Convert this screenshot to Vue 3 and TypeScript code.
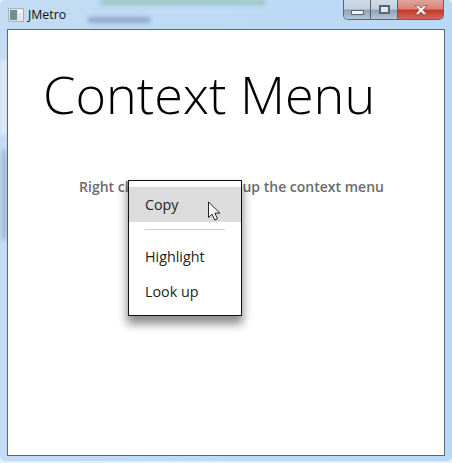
<script setup lang="ts">
const items: string[] = ['Highlight', 'Look up']
</script>

<template>
  <div class="window">
    <div class="blur blur-a"></div>
    <div class="blur blur-b"></div>
    <div class="blur blur-c"></div>
    <div class="blur blur-d"></div>
    <header class="titlebar">
      <div class="brand">
        <svg class="app-icon" width="16" height="16" viewBox="0 0 16 16">
          <rect x="0.5" y="1.5" width="15" height="13" fill="#dfe5ea" stroke="#aab4bd" />
          <rect x="2" y="3" width="7" height="10" fill="#6c8f8f" />
          <rect x="10" y="3" width="4" height="3" fill="#f7f9fa" />
        </svg>
        <span class="title">JMetro</span>
      </div>
      <div class="caption">
        <button class="cap cap-min"><span class="min-glyph"></span></button>
        <button class="cap cap-max"><span class="max-glyph"></span></button>
        <button class="cap cap-close">
          <svg width="18" height="12" viewBox="0 0 18 12">
            <path d="M3 1.500h3.500L9 4l2.500-2.500H15L11 6l4 4.500h-3.500L9 8l-2.500 2.500H3L7 6z" fill="#f6efec" stroke="#6d3a34" stroke-width="0.6" />
          </svg>
        </button>
      </div>
    </header>
    <main class="client">
      <h1 class="heading">Context Menu</h1>
      <p class="hint">Right click here to bring up the context menu</p>
      <div class="menu">
        <div class="item active">Copy</div>
        <div class="sep"></div>
        <div v-for="item in items" :key="item" class="item">{{ item }}</div>
        <svg class="cursor" width="15" height="21" viewBox="0 0 15 21">
          <path d="M1.500 1v15.500l3.600-3.400 2.600 6 2.800-1.200-2.600-5.800h5z" fill="#fff" stroke="#222" stroke-width="1" stroke-linejoin="round" />
        </svg>
      </div>
    </main>
  </div>
</template>

<style>
html, body { margin: 0; background: #dff1fb; }
</style>

<style scoped>
.window {
  position: relative;
  box-sizing: border-box;
  width: 452px;
  height: 461px;
  padding: 0 7px 5px;
  display: flex;
  flex-direction: column;
  overflow: hidden;
  border-radius: 5px;
  background: linear-gradient(90deg, #c3dcf3 0, #b9d9f6 100%);
  font-family: "Open Sans", sans-serif;
}
.blur {
  position: absolute;
  filter: blur(2px);
}
.blur-a {
  left: 100px;
  top: -1px;
  width: 165px;
  height: 6px;
  background: #9cc7c4;
}
.blur-b {
  left: 88px;
  top: 17px;
  width: 62px;
  height: 6px;
  background: #8fa9cf;
}
.blur-c {
  left: 2px;
  top: 150px;
  width: 4px;
  height: 90px;
  background: #98b0ca;
}
.blur-d {
  left: 1px;
  top: 60px;
  width: 5px;
  height: 75px;
  background: #e6edf6;
}
.titlebar {
  position: relative;
  flex: 0 0 29px;
  display: flex;
  justify-content: space-between;
  align-items: flex-start;
}
.brand {
  display: flex;
  align-items: center;
  gap: 4px;
  padding: 7px 0 0 1px;
}
.app-icon { display: block; }
.title {
  font-family: "Open Sans", sans-serif;
  font-size: 12.3px;
  line-height: 16px;
  color: #111;
}
.caption {
  display: flex;
  height: 19px;
  margin-right: 1px;
  border: 1px solid #5d6570;
  border-top: 0;
  border-radius: 0 0 5px 5px;
  overflow: hidden;
}
.cap {
  display: flex;
  align-items: center;
  justify-content: center;
  padding: 0;
  border: 0;
  height: 100%;
  background: linear-gradient(180deg, #cfdbe7 0, #c2d0df 48%, #8fa3b7 52%, #b3c5d7 100%);
}
.cap-min { width: 27px; border-right: 1px solid #59626d; }
.cap-max { width: 27px; border-right: 1px solid #59626d; }
.cap-close {
  width: 45px;
  background: linear-gradient(180deg, #e0a49a 0, #d98376 45%, #c63a2a 55%, #d0685a 100%);
}
.min-glyph {
  display: block;
  width: 11px;
  height: 3px;
  margin-top: 6px;
  background: #f1f5f8;
  border: 1px solid #5a6674;
}
.max-glyph {
  display: block;
  box-sizing: border-box;
  width: 11px;
  height: 9px;
  background: #dfe7ee;
  border: 2px solid #5a6674;
}
.client {
  position: relative;
  flex: 1;
  box-sizing: border-box;
  background: #fff;
  border: 1px solid #56697a;
  padding: 30px 0 0 35px;
}
.heading {
  margin: 0;
  font-family: "Open Sans", sans-serif;
  font-weight: 300;
  font-size: 52.2px;
  line-height: 68px;
  color: #000;
}
.hint {
  margin: 49px 0 0 -35px;
  padding-left: 11px;
  text-align: center;
  font-family: "Open Sans", sans-serif;
  font-weight: 600;
  font-size: 14px;
  line-height: 20px;
  color: #6b6b6b;
}
.menu {
  position: absolute;
  left: 120px;
  top: 150px;
  box-sizing: border-box;
  width: 114px;
  height: 136px;
  padding-top: 6px;
  background: #fff;
  border: 1px solid #111;
  box-shadow: 0 7px 9px 1px rgba(0, 0, 0, 0.45);
}
.item {
  height: 35px;
  padding-left: 16px;
  font-family: "Open Sans", sans-serif;
  font-size: 14.3px;
  line-height: 35px;
  color: #222;
}
.item.active { background: #dcdcdc; }
.sep {
  height: 1px;
  margin: 7px 16px 9px;
  background: #cfcfcf;
}
.cursor {
  position: absolute;
  left: 78px;
  top: 20px;
}
</style>
